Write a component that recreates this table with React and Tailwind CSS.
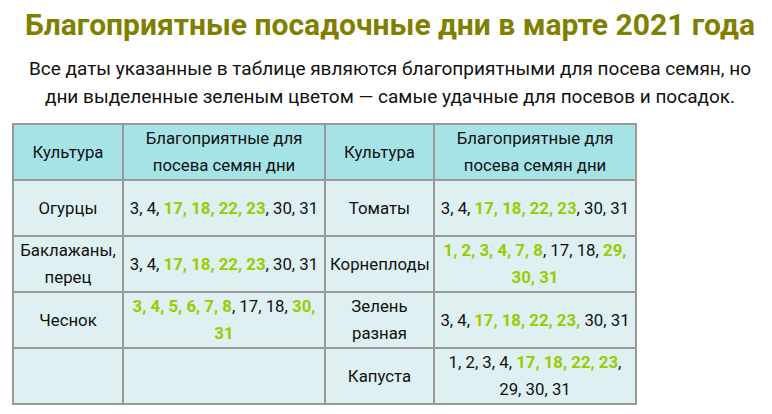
import React from 'react'

const G = ({ children }) => <b className="font-bold text-[#99cc00]">{children}</b>

const rows = [
  {
    a: 'Огурцы',
    b: <>3, 4, <G>17, 18, 22, 23</G>, 30, 31</>,
    c: 'Томаты',
    d: <>3, 4, <G>17, 18, 22, 23</G>, 30, 31</>,
  },
  {
    a: 'Баклажаны, перец',
    b: <>3, 4, <G>17, 18, 22, 23</G>, 30, 31</>,
    c: 'Корнеплоды',
    d: <><G>1, 2, 3, 4, 7, 8</G>, 17, 18, <G>29, 30, 31</G></>,
  },
  {
    a: 'Чеснок',
    b: <><G>3, 4, 5, 6, 7, 8</G>, 17, 18, <G>30, 31</G></>,
    c: 'Зелень разная',
    d: <>3, 4, <G>17, 18, 22, 23,</G> 30, 31</>,
  },
  {
    a: '',
    b: '',
    c: 'Капуста',
    d: <>1, 2, 3, 4, <G>17, 18, 22, 23</G>, 29, 30, 31</>,
  },
]

const App = () => {
  return (
    <div className="bg-white h-[414px] w-[772px] overflow-hidden font-['Roboto',sans-serif] text-[#111]">
      <div className="pl-3 pr-1">
        <h2 className="text-center text-[30px] leading-[36px] font-bold text-[#808000] pt-[7px]">
          Благоприятные посадочные дни в марте 2021 года
        </h2>
        <p className="text-center text-[19px] leading-[28px] mt-[12px] px-4">
          Все даты указанные в таблице являются благоприятными для посева семян, но дни выделенные зеленым цветом — самые удачные для посевов и посадок.
        </p>

        <table className="mt-[12px] border-collapse border-2 border-[#999] text-[16.8px] leading-[27px] table-fixed w-[623px]">
          <colgroup>
            <col className="w-[110px]" />
            <col className="w-[202px]" />
            <col className="w-[109px]" />
            <col className="w-[202px]" />
          </colgroup>
          <thead>
            <tr className="h-[55px] bg-[#a6e3e7]">
              <th className="border-2 border-[#999] font-normal px-1">Культура</th>
              <th className="border-2 border-[#999] font-normal px-2">Благоприятные для посева семян дни</th>
              <th className="border-2 border-[#999] font-normal px-1">Культура</th>
              <th className="border-2 border-[#999] font-normal px-2">Благоприятные для посева семян дни</th>
            </tr>
          </thead>
          <tbody>
            {rows.map((r, i) => (
              <tr key={i} className="h-[56px] bg-[#dff0f3]">
                <td className="border-2 border-[#999] text-center px-1">{r.a}</td>
                <td className="border-2 border-[#999] text-center px-1">{r.b}</td>
                <td className="border-2 border-[#999] text-center px-1">{r.c}</td>
                <td className="border-2 border-[#999] text-center px-1">{r.d}</td>
              </tr>
            ))}
          </tbody>
        </table>
      </div>
    </div>
  )
}

export default App
